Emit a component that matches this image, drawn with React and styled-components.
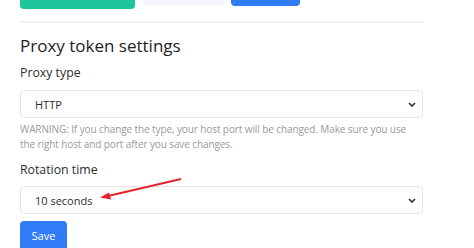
import React, { useState } from "react";
import styled, { createGlobalStyle } from "styled-components";

const GlobalStyle = createGlobalStyle`
  html, body { margin: 0; padding: 0; background: #fff; }
  body { font-family: 'Open Sans', 'Liberation Sans', sans-serif; color: #212529; }
`;

const Page = styled.div`
  width: 474px;
  height: 248px;
  overflow: hidden;
  padding: 0 51px 0 20px;
  box-sizing: border-box;
`;

const TopBar = styled.div`
  display: flex;
  align-items: flex-start;
  gap: 7px;
  margin-top: -20px;
`;

const TopButton = styled.div`
  height: ${(p) => p.$h}px;
  width: ${(p) => p.$w}px;
  margin-left: ${(p) => p.$ml || 0}px;
  background: ${(p) => p.$bg};
  border-radius: 4px;
`;

const Divider = styled.hr`
  border: 0;
  border-top: 2px solid #f0f1f3;
  margin: 12px 0 0;
`;

const Title = styled.h2`
  font-size: 17px;
  font-weight: 400;
  margin: 11px 0 0;
  line-height: 23px;
  color: #1e1e1e;
`;

const Label = styled.div`
  font-size: 12.3px;
  line-height: 17px;
  color: #2e2e2e;
  margin-top: ${(p) => p.$mt}px;
`;

const SelectWrap = styled.div`
  position: relative;
  margin-top: ${(p) => p.$mt}px;
`;

const Select = styled.select`
  appearance: none;
  width: 100%;
  height: 28px;
  border: 1px solid #e4e6e9;
  border-radius: 4px;
  background: #fff;
  padding: 0 14px;
  font-family: 'Open Sans', 'Liberation Sans', sans-serif;
  font-size: 11px;
  color: #2e2e2e;
  box-sizing: border-box;
  outline: none;
`;

const Chevron = styled.svg`
  position: absolute;
  right: 7px;
  top: 12px;
  pointer-events: none;
`;

const Help = styled.p`
  margin: 4px 0 0;
  font-size: 10px;
  line-height: 15px;
  letter-spacing: -0.1px;
  color: #9a9a9a;
  white-space: nowrap;
`;

const SaveButton = styled.button`
  margin-top: 7px;
  width: 47px;
  height: 32px;
  border: 0;
  border-radius: 4px;
  background: #2f7cf6;
  color: #fff;
  font-family: 'Open Sans', 'Liberation Sans', sans-serif;
  font-size: 11px;
  padding: 0 0 4px;
`;

const Arrow = styled.svg`
  position: absolute;
  left: 58px;
  top: -8px;
  pointer-events: none;
`;

const ChevronIcon = () => (
  <Chevron width="8" height="5" viewBox="0 0 8 5">
    <path d="M1 1l3 3 3-3" fill="none" stroke="#333" strokeWidth="1.7" />
  </Chevron>
);

export default function App() {
  const [type, setType] = useState("HTTP");
  const [rotation, setRotation] = useState("10");

  return (
    <Page>
      <GlobalStyle />
      <TopBar>
        <TopButton $w={115} $h={29} $bg="#1ec49b" />
        <TopButton $w={83} $h={25} $bg="#f4f6fb" />
        <TopButton $w={69} $h={26} $ml={-1} $bg="#2f7cf6" />
      </TopBar>
      <Divider />
      <Title>Proxy token settings</Title>

      <Label $mt={7}>Proxy type</Label>
      <SelectWrap $mt={9}>
        <Select value={type} onChange={(e) => setType(e.target.value)}>
          <option>HTTP</option>
          <option>SOCKS5</option>
        </Select>
        <ChevronIcon />
      </SelectWrap>
      <Help>
        WARNING: If you change the type, your host port will be changed. Make sure you use
        <br />
        the right host and port after you save changes.
      </Help>

      <Label $mt={9}>Rotation time</Label>
      <SelectWrap $mt={8}>
        <Select value={rotation} onChange={(e) => setRotation(e.target.value)}>
          <option value="10">10 seconds</option>
          <option value="30">30 seconds</option>
        </Select>
        <ChevronIcon />
        <Arrow width="110" height="30" viewBox="0 0 110 30">
          <line x1="103" y1="1" x2="30" y2="18" stroke="#e3252b" strokeWidth="2" />
          <path d="M22 19.5l9-5 2 7z" fill="#e3252b" />
        </Arrow>
      </SelectWrap>
      <SaveButton>Save</SaveButton>
    </Page>
  );
}
